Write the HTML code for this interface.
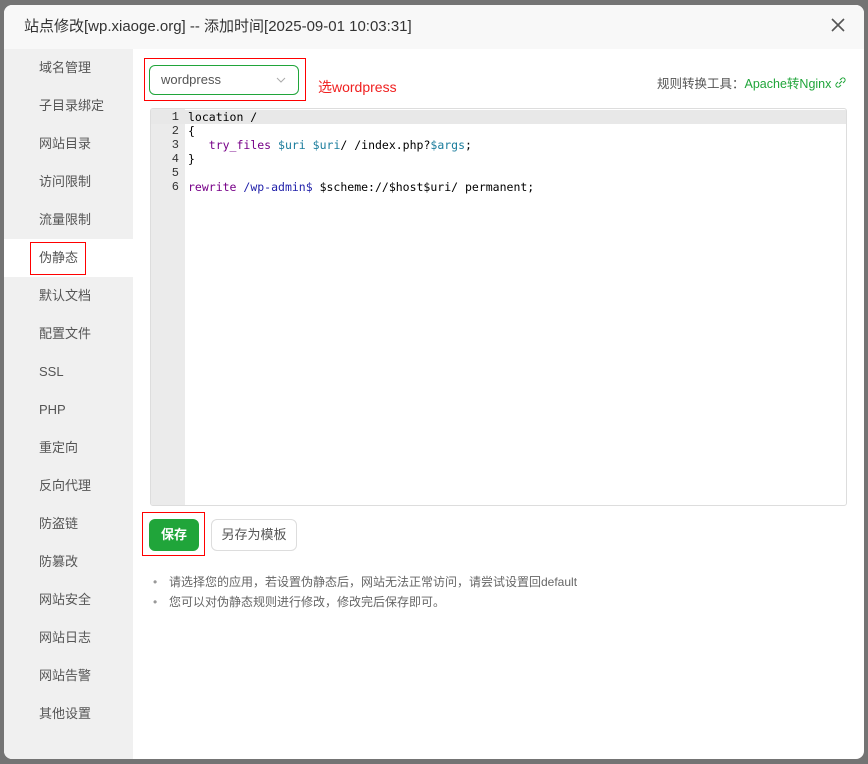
<!DOCTYPE html>
<html><head><meta charset="utf-8"><style>
*{margin:0;padding:0;box-sizing:border-box}
body{width:868px;height:764px;background:#747474;font-family:"Liberation Sans","Noto Sans CJK SC",sans-serif;position:relative;overflow:hidden}
.dlg{position:absolute;left:4px;top:5px;width:860px;height:754px;background:#fff;border-radius:8px;overflow:hidden}
.hd{height:44px;background:#f8f8f8;font-size:15px;color:#333;line-height:44px;padding-left:20px}
.x{position:absolute;right:18px;top:12px}
.side{position:absolute;left:0;top:44px;width:129px;bottom:0;background:#f0f0f0}
.side div{height:38px;line-height:38px;padding-left:35px;font-size:13px;color:#555}
.side .on{background:#fff}
.sel{position:absolute;left:149px;top:65px;width:150px;height:30px;border:1px solid #20a53a;border-radius:6px;font-size:13px;color:#555;line-height:28px;padding-left:11px}
.box{position:absolute;border:1px solid #f00}
.ed{position:absolute;left:150px;top:108px;width:697px;height:398px;border:1px solid #ddd;border-radius:3px;background:#fff;overflow:hidden}
.gut{position:absolute;left:0;top:0;width:34px;height:100%;background:#ebebeb}
.ln{position:absolute;left:0;width:28px;text-align:right;font:12px/14px "Liberation Mono",monospace;color:#333}
.cl{position:absolute;left:37px;font:11.5px/14px "DejaVu Sans Mono","Liberation Mono",monospace;color:#000;white-space:pre}
.k{color:#770088}.v{color:#1a7c9c}.p{color:#2222aa}
.btn{position:absolute;height:32px;border-radius:6px;font-size:13px;line-height:32px;text-align:center}
ul{position:absolute;left:169px;top:572px;font-size:12px;color:#666;line-height:20px;list-style:none}
ul li:before{content:"•";color:#999;margin-left:-16px;width:16px;display:inline-block}
</style></head><body>
<div class="dlg">
<div class="hd">站点修改[wp.xiaoge.org] -- 添加时间[2025-09-01 10:03:31]</div>
<svg class="x" width="16" height="16" viewBox="0 0 16 16"><path d="M2 2L14 14M14 2L2 14" stroke="#555" stroke-width="1.6"/></svg>
<div class="side">
<div>域名管理</div><div>子目录绑定</div><div>网站目录</div><div>访问限制</div><div>流量限制</div><div class="on">伪静态</div><div>默认文档</div><div>配置文件</div><div>SSL</div><div>PHP</div><div>重定向</div><div>反向代理</div><div>防盗链</div><div>防篡改</div><div>网站安全</div><div>网站日志</div><div>网站告警</div><div>其他设置</div>
</div>
</div>
<div class="box" style="left:30px;top:242px;width:56px;height:33px"></div>
<div class="box" style="left:144px;top:58px;width:162px;height:43px"></div>
<div class="sel">wordpress<svg style="position:absolute;right:12px;top:11px" width="10" height="6"><path d="M1 1L5 5L9 1" fill="none" stroke="#aaa"/></svg></div>
<div style="position:absolute;left:318px;top:77px;color:#f02020;font-size:14px">选wordpress</div>
<div style="position:absolute;left:657px;top:73px;font-size:12.5px;color:#555">规则转换工具：<span style="color:#20a53a">Apache转Nginx</span> <svg width="11" height="11" viewBox="0 0 11 11"><path d="M4 7L7 4M5 3L6.5 1.5a2 2 0 0 1 3 3L8 6M6 8L4.5 9.5a2 2 0 0 1-3-3L3 5" fill="none" stroke="#20a53a" stroke-width="1"/></svg></div>
<div class="ed"><div class="gut"></div><div style="position:absolute;left:0;top:1px;width:100%;height:14px;background:#e8e8e8"></div>
<div class="ln" style="top:1px">1</div><div class="ln" style="top:15px">2</div><div class="ln" style="top:29px">3</div><div class="ln" style="top:43px">4</div><div class="ln" style="top:57px">5</div><div class="ln" style="top:71px">6</div>
<div class="cl" style="top:1px">location /</div>
<div class="cl" style="top:15px">{</div>
<div class="cl" style="top:29px">   <span class="k">try_files</span> <span class="v">$uri</span> <span class="v">$uri</span>/ /index.php?<span class="v">$args</span>;</div>
<div class="cl" style="top:43px">}</div>
<div class="cl" style="top:71px"><span class="k">rewrite</span> <span class="p">/wp-admin$</span> $scheme://$host$uri/ permanent;</div>
</div>
<div class="box" style="left:142px;top:512px;width:63px;height:44px"></div>
<div class="btn" style="left:149px;top:519px;width:50px;background:#20a53a;color:#fff;font-weight:bold">保存</div>
<div class="btn" style="left:211px;top:519px;width:86px;border:1px solid #ddd;color:#555;line-height:30px">另存为模板</div>
<ul><li>请选择您的应用，若设置伪静态后，网站无法正常访问，请尝试设置回default</li><li>您可以对伪静态规则进行修改，修改完后保存即可。</li></ul>
</body></html>
